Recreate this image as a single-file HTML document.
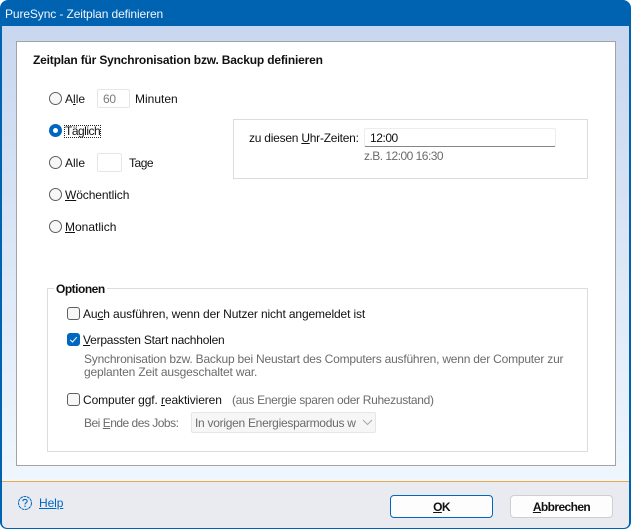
<!DOCTYPE html>
<html lang="de"><head><meta charset="utf-8"><title>PureSync</title>
<style>
html,body{margin:0;padding:0}
body{width:631px;height:529px;overflow:hidden;position:relative;background:#fff;font:12px/16px "Liberation Sans",sans-serif;color:#111}
#w{position:absolute;inset:0;background:#0063b1;border-radius:8px 8px 7px 7px;overflow:hidden}
#c{position:absolute;left:2px;right:2px;top:26px;height:455px;background:linear-gradient(#c8d7ef,#eff6fd)}
#f{position:absolute;left:2px;right:2px;top:482px;height:46px;background:#e9ebf0;border-radius:0 0 5px 5px}
#l{position:absolute;left:2px;right:2px;top:481px;height:1px;background:#e5aa4a}
#p{position:absolute;left:16px;top:41px;width:600px;height:425px;box-sizing:border-box;background:#fff;border:1px solid #a3a3a3}
.t,.b{position:absolute;white-space:nowrap}
.b{box-sizing:border-box}
.g{color:#6b6b6b}
.s{font-weight:bold}
.r{position:absolute;width:13px;height:13px;box-sizing:border-box;border:1px solid #5f5f5f;border-radius:50%;background:#f7f7f7}
.k{position:absolute;width:13px;height:13px;box-sizing:border-box;border:1px solid #5f5f5f;border-radius:3px;background:#f7f7f7}
.i{position:absolute;box-sizing:border-box;border:1px solid #e6e6e6;border-radius:2px;background:#fff}
u{text-underline-offset:1px}
</style></head><body>
<div id="w">
<div class="t" style="left:5px;top:6px;color:#f2f6fb;letter-spacing:-.11px">PureSync - Zeitplan definieren</div>
<div id="c"></div><div id="f"></div><div id="l"></div>
</div>
<div id="p"></div>
<div class="t s" style="left:33px;top:52px;letter-spacing:-.18px">Zeitplan für Synchronisation bzw. Backup definieren</div>

<div class="r" style="left:49px;top:92px"></div>
<div class="t" style="left:65px;top:91px">A<u>l</u>le</div>
<div class="i" style="left:97px;top:89px;width:33px;height:19px"></div>
<div class="t" style="left:103px;top:91px;color:#7a7a7a;letter-spacing:-.3px">60</div>
<div class="t" style="left:135px;top:91px">Minuten</div>

<div class="r" style="left:49px;top:124px;border:4px solid #0067c0;background:#fff"></div>
<div class="t" style="left:64px;top:125px;width:37px;height:13px;box-sizing:border-box;border:1px dotted #222"></div>
<div class="t" style="left:65px;top:123px;letter-spacing:-.5px">Täglich</div>

<div class="r" style="left:49px;top:156px"></div>
<div class="t" style="left:65px;top:155px">Alle</div>
<div class="i" style="left:97px;top:153px;width:25px;height:19px"></div>
<div class="t" style="left:129px;top:155px;letter-spacing:-.5px">Ta<u>g</u>e</div>

<div class="r" style="left:49px;top:188px"></div>
<div class="t" style="left:65px;top:187px;letter-spacing:-.1px"><u>W</u>öchentlich</div>
<div class="r" style="left:49px;top:220px"></div>
<div class="t" style="left:65px;top:219px"><u>M</u>onatlich</div>

<div class="b" style="left:233px;top:119px;width:355px;height:60px;border:1px solid #dcdcdc"></div>
<div class="t" style="left:249px;top:130px;letter-spacing:-.24px">zu diesen <u>U</u>hr-Zeiten:</div>
<div class="b" style="left:364px;top:128px;width:192px;height:19px;background:#fff;border:1px solid #ececec;border-bottom:1px solid #868686;border-radius:2px"></div>
<div class="t" style="left:370px;top:130px;letter-spacing:-.45px">12:00</div>
<div class="t g" style="left:364px;top:148px;letter-spacing:-.52px">z.B. 12:00 16:30</div>

<div class="b" style="left:47px;top:288px;width:541px;height:164px;border:1px solid #dcdcdc"></div>
<div class="t s" style="left:54px;top:281px;background:#fff;padding:0 2px;letter-spacing:-.5px">Optionen</div>

<div class="k" style="left:67px;top:307px"></div>
<div class="t" style="left:83px;top:306px;letter-spacing:-.13px">Au<u>c</u>h ausführen, wenn der Nutzer nicht angemeldet ist</div>

<div class="k" style="left:67px;top:333px;background:#0067c0;border-color:#0067c0"></div>
<svg style="position:absolute;left:67px;top:333px" width="13" height="13"><path d="M3.2 6.8 5.5 9 9.8 4.2" fill="none" stroke="#fff" stroke-width="1"/></svg>
<div class="t" style="left:83px;top:332px;letter-spacing:-.23px"><u>V</u>erpassten Start nachholen</div>
<div class="t g" style="left:84px;top:351px;letter-spacing:-.21px">Synchronisation bzw. Backup bei Neustart des Computers ausführen, wenn der Computer zur</div>
<div class="t g" style="left:84px;top:364px;letter-spacing:-.17px">geplanten Zeit ausgeschaltet war.</div>

<div class="k" style="left:67px;top:393px"></div>
<div class="t" style="left:83px;top:392px;letter-spacing:-.1px">Computer ggf. <u>r</u>eaktivieren</div>
<div class="t g" style="left:232px;top:392px;letter-spacing:-.32px">(aus Energie sparen oder Ruhezustand)</div>

<div class="t g" style="left:84px;top:415px;letter-spacing:-.5px">Bei <u>E</u>nde des Jobs:</div>
<div class="i" style="left:191px;top:412px;width:185px;height:21px;background:#f6f6f6"></div>
<div class="t g" style="left:195px;top:415px;width:161px;overflow:hidden;letter-spacing:-.28px">In vorigen Energiesparmodus wechseln</div>
<svg style="position:absolute;left:362px;top:419px" width="11" height="7"><path d="M1 1 5.500 5.500 10 1" fill="none" stroke="#a8a8a8" stroke-width="1"/></svg>

<svg style="position:absolute;left:17px;top:495px" width="16" height="16"><circle cx="8" cy="8" r="6.500" fill="none" stroke="#0067c0" stroke-width="1" stroke-dasharray="3 .6"/><path d="M5.800 6.300C5.800 3.800 10.200 3.800 10.200 6.200 10.200 7.700 8 7.700 8 9.500" fill="none" stroke="#0067c0" stroke-width="1.100"/><rect x="7.400" y="10.600" width="1.300" height="1.300" fill="#0067c0"/></svg>
<div class="t" style="left:39px;top:495px;color:#0067c0;letter-spacing:-.1px"><u>Help</u></div>

<div class="b" style="left:390px;top:495px;width:103px;height:23px;border:1px solid #0067c0;border-radius:4px;background:#fdfdfd;text-align:center;line-height:22px;font-weight:bold;letter-spacing:-.6px"><u>O</u>K</div>
<div class="b" style="left:510px;top:495px;width:103px;height:23px;border:1px solid #cfcfcf;border-radius:4px;background:#fdfdfd;text-align:center;line-height:22px;font-weight:bold;letter-spacing:-.6px"><u>A</u>bbrechen</div>
</body></html>
